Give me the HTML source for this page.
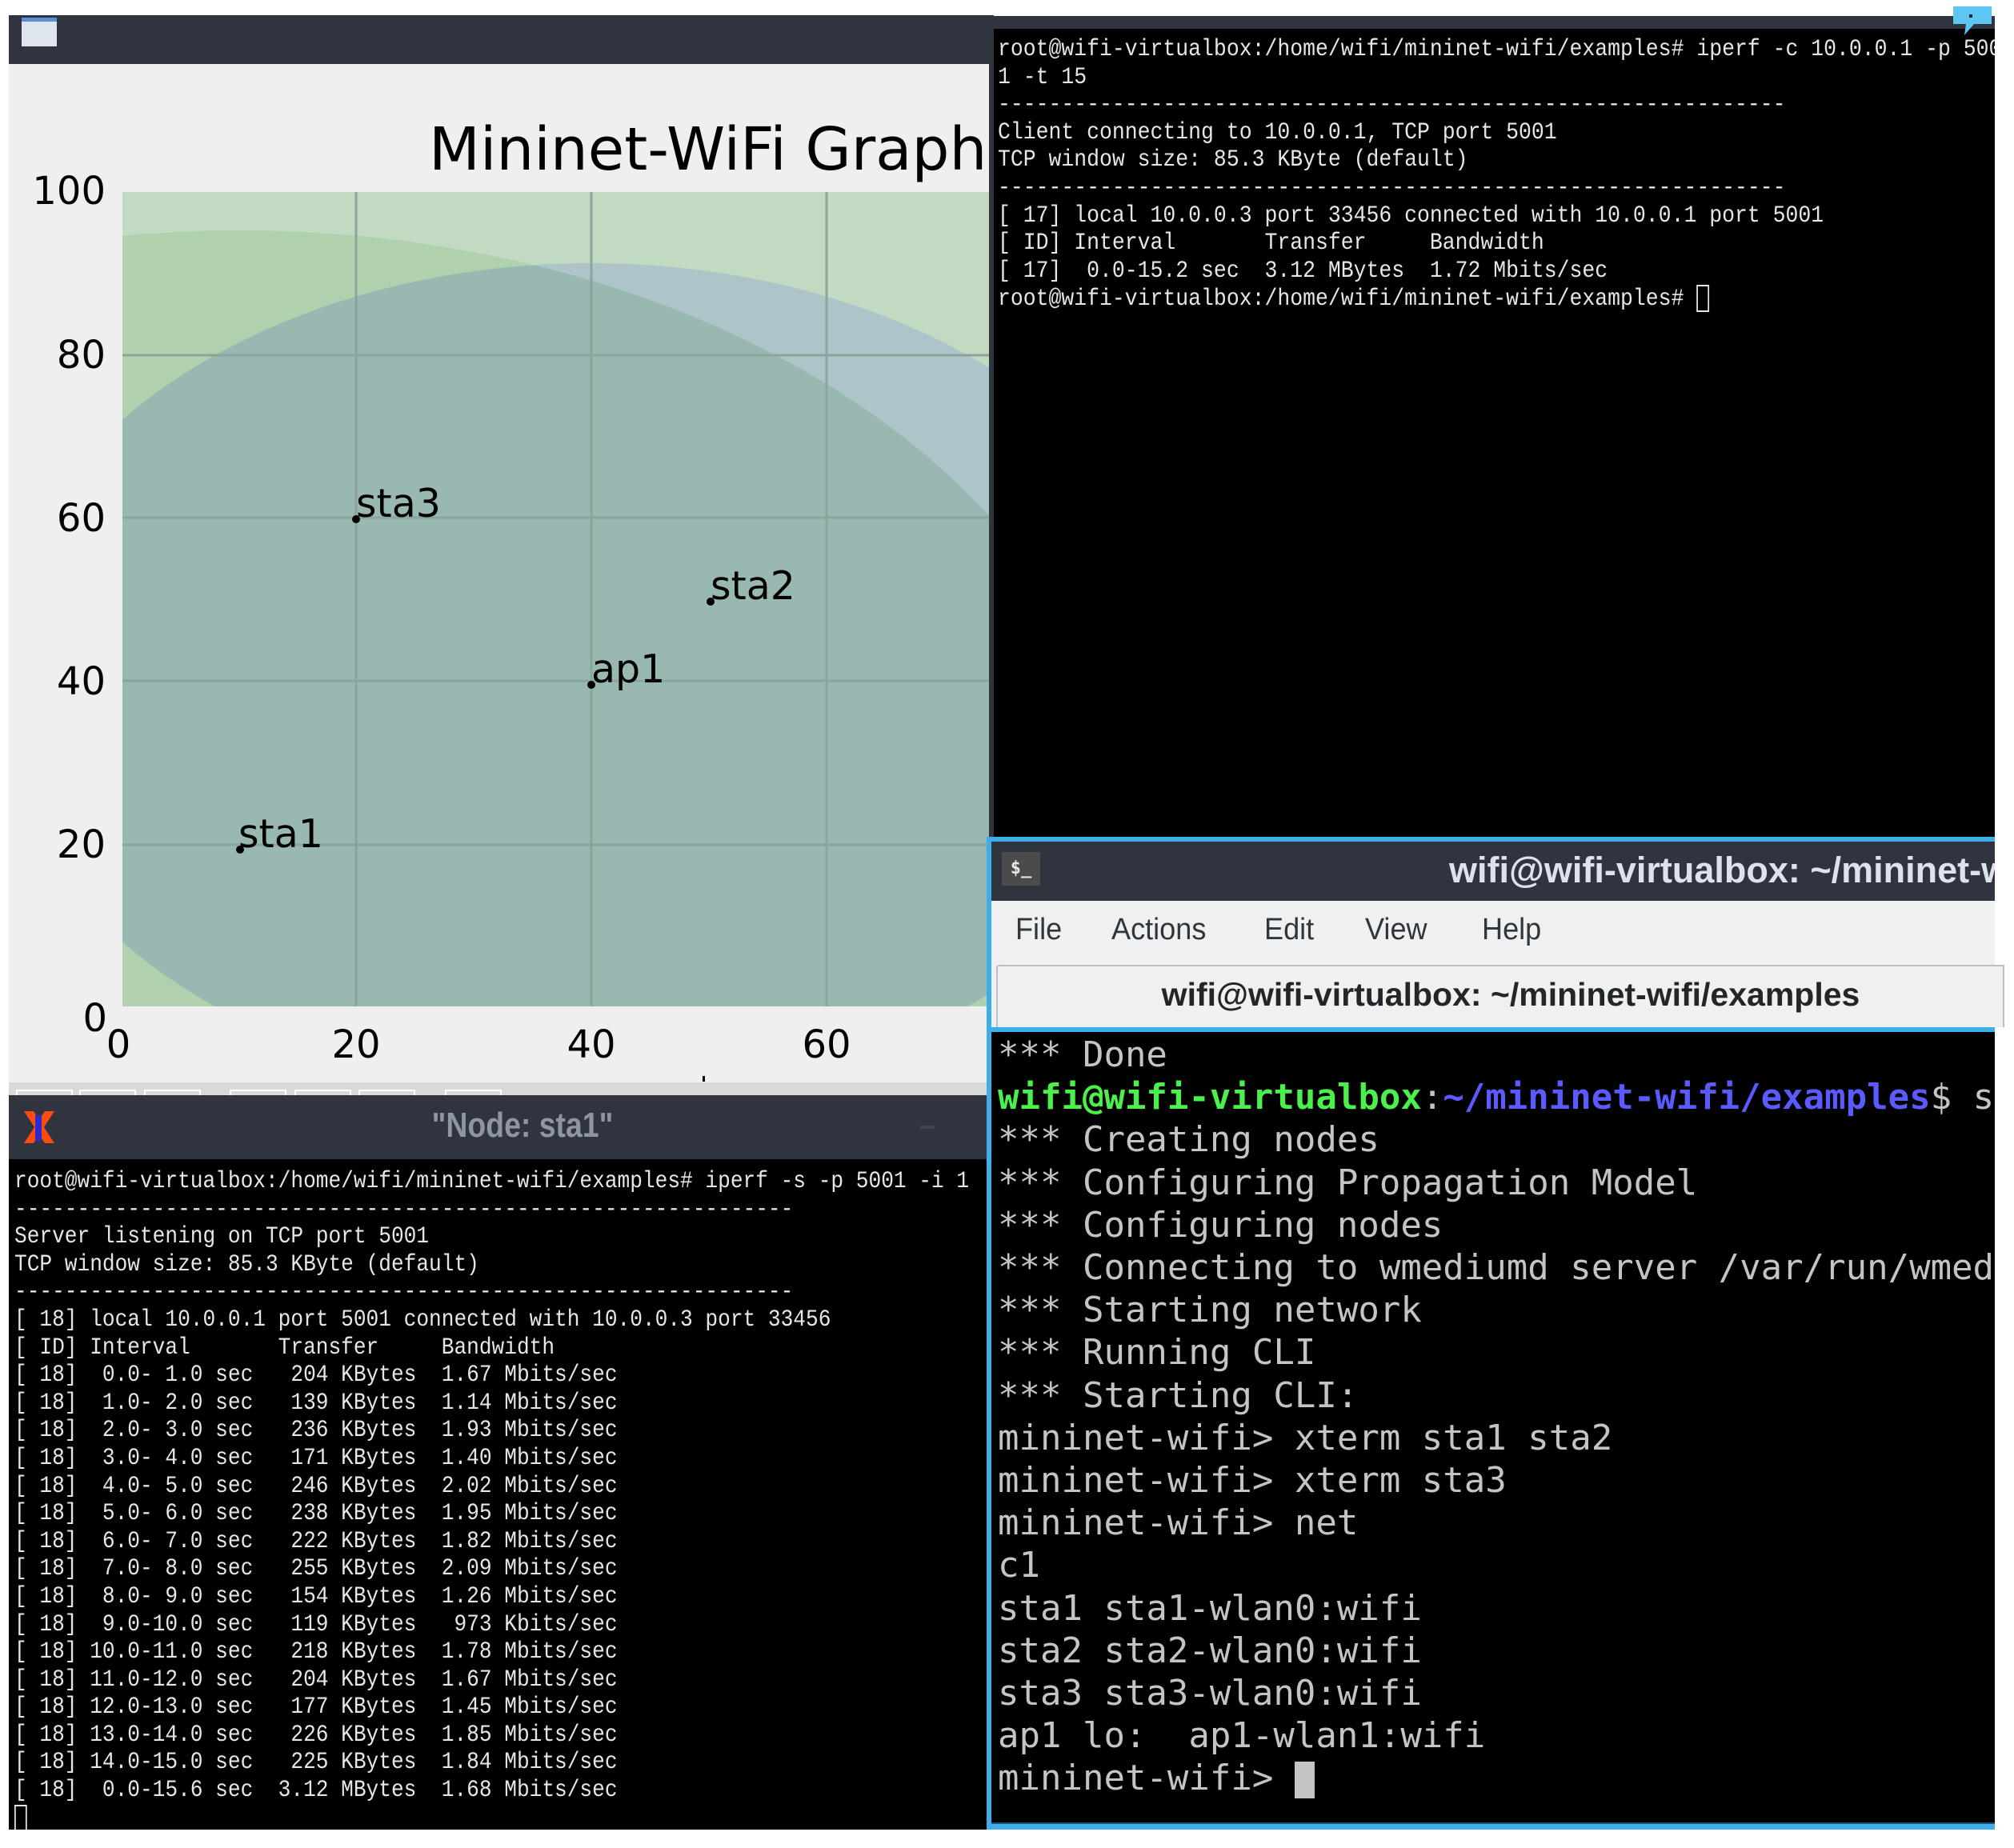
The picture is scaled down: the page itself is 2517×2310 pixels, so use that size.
<!DOCTYPE html>
<html><head><meta charset="utf-8">
<style>
html,body{margin:0;padding:0;background:#fff;}
body{width:2517px;height:2310px;position:relative;overflow:hidden;}
.abs{position:absolute;}
.xt{position:absolute;margin:0;font-family:"Liberation Mono",monospace;font-size:30px;line-height:34.6px;color:#e6e6e6;white-space:pre;transform-origin:0 0;}
.qt{position:absolute;margin:0;font-family:"DejaVu Sans Mono",monospace;font-size:44px;line-height:53.2px;color:#c4c4c4;white-space:pre;}
.g{color:#4bf04b;font-weight:bold}
.b{color:#5a5aff;font-weight:bold}
.menu{position:absolute;top:1141px;font-family:"Liberation Sans",sans-serif;font-size:38px;color:#31363b;transform:scaleX(0.95);transform-origin:0 0;}
</style></head><body>

<!-- Graph window -->
<div class="abs" style="left:11px;top:19px;width:1225px;height:1334px;background:#efefef;"></div>
<div class="abs" style="left:11px;top:19px;width:1225px;height:61px;background:#2f343f;"></div>
<div class="abs" style="left:27px;top:22px;width:44px;height:36px;background:#dfe5ec;border-top:5px solid #5a8fd2;box-sizing:border-box;"></div>
<div class="abs" style="left:11px;top:1353px;width:1225px;height:16px;background:#d9d9d9;"></div>
<div class="abs" style="left:20px;top:1362px;width:71px;height:7px;border:2px solid #fff;border-bottom:none;box-sizing:border-box"></div>
<div class="abs" style="left:99px;top:1362px;width:71px;height:7px;border:2px solid #fff;border-bottom:none;box-sizing:border-box"></div>
<div class="abs" style="left:180px;top:1362px;width:71px;height:7px;border:2px solid #fff;border-bottom:none;box-sizing:border-box"></div>
<div class="abs" style="left:287px;top:1362px;width:71px;height:7px;border:2px solid #fff;border-bottom:none;box-sizing:border-box"></div>
<div class="abs" style="left:368px;top:1362px;width:71px;height:7px;border:2px solid #fff;border-bottom:none;box-sizing:border-box"></div>
<div class="abs" style="left:448px;top:1362px;width:71px;height:7px;border:2px solid #fff;border-bottom:none;box-sizing:border-box"></div>
<div class="abs" style="left:556px;top:1362px;width:71px;height:7px;border:2px solid #fff;border-bottom:none;box-sizing:border-box"></div>

<svg class="abs" style="left:0;top:0" width="1236" height="1353" viewBox="0 0 1236 1353">
<defs>
<clipPath id="pa"><rect x="153" y="240" width="1083" height="1018"/></clipPath>
<clipPath id="ge"><ellipse cx="300" cy="1054" rx="1107" ry="766"/></clipPath>
</defs>
<g clip-path="url(#pa)">
<rect x="153" y="240" width="1083" height="1018" fill="#c2dac2"/>
<ellipse cx="300" cy="1054" rx="1107" ry="766" fill="#afd1ad"/>
<ellipse cx="739" cy="851" rx="751" ry="522" fill="#adc4c8"/>
<g clip-path="url(#ge)"><ellipse cx="739" cy="851" rx="751" ry="522" fill="#9ab8b2"/></g>
<g stroke="#8aa69c" stroke-width="3">
<line x1="445" y1="240" x2="445" y2="1258"/>
<line x1="739" y1="240" x2="739" y2="1258"/>
<line x1="1033" y1="240" x2="1033" y2="1258"/>
<line x1="153" y1="444" x2="1236" y2="444"/>
<line x1="153" y1="647" x2="1236" y2="647"/>
<line x1="153" y1="851" x2="1236" y2="851"/>
<line x1="153" y1="1056" x2="1236" y2="1056"/>
</g>
</g>
<g font-family="DejaVu Sans, sans-serif" fill="#000">
<text x="536" y="212" font-size="74">Mininet-WiFi Graph</text>
<g font-size="48" text-anchor="end">
<text x="132" y="255">100</text>
<text x="132" y="460">80</text>
<text x="132" y="664">60</text>
<text x="132" y="868">40</text>
<text x="132" y="1072">20</text>
<text x="134" y="1289">0</text>
</g>
<g font-size="48" text-anchor="middle">
<text x="148" y="1322">0</text>
<text x="445" y="1322">20</text>
<text x="739" y="1322">40</text>
<text x="1033" y="1322">60</text>
</g>
<g font-size="49">
<circle cx="445" cy="649" r="5"/><text x="445" y="646">sta3</text>
<circle cx="888" cy="752" r="5"/><text x="888" y="749">sta2</text>
<circle cx="739" cy="856" r="5"/><text x="739" y="853">ap1</text>
<circle cx="300" cy="1062" r="5"/><text x="298" y="1059">sta1</text>
</g>
</g>
<rect x="878" y="1345" width="3" height="7" fill="#000"/>
</svg>
<div class="abs" style="left:1236px;top:19px;width:6px;height:1030px;background:#2f343f;"></div>

<!-- Top-right xterm -->
<div class="abs" style="left:1242px;top:20px;width:1251px;height:16px;background:#2f343f;"></div>
<div class="abs" style="left:1242px;top:36px;width:1251px;height:1012px;background:#000;overflow:hidden;">
<pre class="xt" style="left:5px;top:9px;transform:scaleX(0.882);">root@wifi-virtualbox:/home/wifi/mininet-wifi/examples# iperf -c 10.0.0.1 -p 500
1 -t 15
--------------------------------------------------------------
Client connecting to 10.0.0.1, TCP port 5001
TCP window size: 85.3 KByte (default)
--------------------------------------------------------------
[ 17] local 10.0.0.3 port 33456 connected with 10.0.0.1 port 5001
[ ID] Interval       Transfer     Bandwidth
[ 17]  0.0-15.2 sec  3.12 MBytes  1.72 Mbits/sec
root@wifi-virtualbox:/home/wifi/mininet-wifi/examples# <span style="display:inline-block;width:14px;height:30px;border:2px solid #e6e6e6;vertical-align:middle;"></span></pre>
</div>
<svg class="abs" style="left:2437px;top:0" width="56" height="46" viewBox="0 0 56 46"><path d="M4 8 L52 8 L52 30 L30 30 L18 44 L20 30 L4 30 Z" fill="#5ec6f3"/><rect x="24" y="18" width="4" height="4" fill="#123"/></svg>

<!-- Bottom-left xterm -->
<div class="abs" style="left:11px;top:1369px;width:1225px;height:80px;background:#2f343f;"></div>
<svg class="abs" style="left:26px;top:1386px" width="46" height="46" viewBox="0 0 46 46">
<path d="M4 3 L16 3 L42 43 L30 43 Z" fill="#ff4a10"/>
<path d="M30 3 L42 3 L16 43 L4 43 Z" fill="#ff4a10"/>
<path d="M18 8 L26 8 L26 40 L18 40 Z" fill="#2a2acf"/>
</svg>
<div class="abs" style="left:453px;top:1382px;width:400px;text-align:center;font-family:'Liberation Sans',sans-serif;font-weight:bold;font-size:44px;color:#8e96a3;transform:scaleX(0.85);">"Node: sta1"</div>
<div class="abs" style="left:1150px;top:1407px;width:18px;height:4px;background:#3f4551;"></div>
<div class="abs" style="left:11px;top:1449px;width:1225px;height:838px;background:#000;overflow:hidden;">
<pre class="xt" style="left:7px;top:11px;transform:scaleX(0.872);">root@wifi-virtualbox:/home/wifi/mininet-wifi/examples# iperf -s -p 5001 -i 1
--------------------------------------------------------------
Server listening on TCP port 5001
TCP window size: 85.3 KByte (default)
--------------------------------------------------------------
[ 18] local 10.0.0.1 port 5001 connected with 10.0.0.3 port 33456
[ ID] Interval       Transfer     Bandwidth
[ 18]  0.0- 1.0 sec   204 KBytes  1.67 Mbits/sec
[ 18]  1.0- 2.0 sec   139 KBytes  1.14 Mbits/sec
[ 18]  2.0- 3.0 sec   236 KBytes  1.93 Mbits/sec
[ 18]  3.0- 4.0 sec   171 KBytes  1.40 Mbits/sec
[ 18]  4.0- 5.0 sec   246 KBytes  2.02 Mbits/sec
[ 18]  5.0- 6.0 sec   238 KBytes  1.95 Mbits/sec
[ 18]  6.0- 7.0 sec   222 KBytes  1.82 Mbits/sec
[ 18]  7.0- 8.0 sec   255 KBytes  2.09 Mbits/sec
[ 18]  8.0- 9.0 sec   154 KBytes  1.26 Mbits/sec
[ 18]  9.0-10.0 sec   119 KBytes   973 Kbits/sec
[ 18] 10.0-11.0 sec   218 KBytes  1.78 Mbits/sec
[ 18] 11.0-12.0 sec   204 KBytes  1.67 Mbits/sec
[ 18] 12.0-13.0 sec   177 KBytes  1.45 Mbits/sec
[ 18] 13.0-14.0 sec   226 KBytes  1.85 Mbits/sec
[ 18] 14.0-15.0 sec   225 KBytes  1.84 Mbits/sec
[ 18]  0.0-15.6 sec  3.12 MBytes  1.68 Mbits/sec
<span style="display:inline-block;width:14px;height:32px;border:2px solid #e6e6e6;vertical-align:top;"></span></pre>
</div>

<!-- Bottom-right qterminal -->
<div class="abs" style="left:1233px;top:1046px;width:1260px;height:1241px;background:#3daee9;"></div>
<div class="abs" style="left:1239px;top:2278px;width:1254px;height:9px;background:#3daee9;border-top:2px solid #1d4e6b;box-sizing:border-box;"></div>
<div class="abs" style="left:1239px;top:1052px;width:1254px;height:74px;background:#2f343f;overflow:hidden;">
<div class="abs" style="left:13px;top:13px;width:48px;height:42px;background:#4b4b4b;color:#e8e8e8;font-family:'DejaVu Sans Mono',monospace;font-weight:bold;font-size:22px;line-height:42px;text-align:center;">$_</div>
<div class="abs" style="left:572px;top:10px;white-space:nowrap;font-family:'Liberation Sans',sans-serif;font-weight:bold;font-size:45px;color:#dde3ea;">wifi@wifi-virtualbox: ~/mininet-wifi/examples</div>
</div>
<div class="abs" style="left:1239px;top:1126px;width:1254px;height:158px;background:#eff0f1;"></div>
<div class="menu" style="left:1269px;">File</div>
<div class="menu" style="left:1389px;">Actions</div>
<div class="menu" style="left:1580px;">Edit</div>
<div class="menu" style="left:1706px;">View</div>
<div class="menu" style="left:1852px;">Help</div>
<div class="abs" style="left:1245px;top:1206px;width:1260px;height:78px;border:2px solid #bcbebf;border-bottom:none;border-radius:4px 0 0 0;background:#eff0f1;box-sizing:border-box;"></div>
<div class="abs" style="left:1288px;top:1220px;width:1200px;text-align:center;font-family:'Liberation Sans',sans-serif;font-weight:bold;font-size:41px;color:#232629;">wifi@wifi-virtualbox: ~/mininet-wifi/examples</div>
<div class="abs" style="left:1239px;top:1290px;width:1254px;height:988px;background:#000;overflow:hidden;">
<pre class="qt" style="left:8px;top:2px;">*** Done
<span class="g">wifi@wifi-virtualbox</span>:<span class="b">~/mininet-wifi/examples</span>$ s
*** Creating nodes
*** Configuring Propagation Model
*** Configuring nodes
*** Connecting to wmediumd server /var/run/wmediumd.sock
*** Starting network
*** Running CLI
*** Starting CLI:
mininet-wifi&gt; xterm sta1 sta2
mininet-wifi&gt; xterm sta3
mininet-wifi&gt; net
c1
sta1 sta1-wlan0:wifi
sta2 sta2-wlan0:wifi
sta3 sta3-wlan0:wifi
ap1 lo:  ap1-wlan1:wifi
mininet-wifi&gt; <span style="display:inline-block;width:25px;height:46px;background:#c4c4c4;vertical-align:middle;"></span></pre>
</div>

</body></html>
